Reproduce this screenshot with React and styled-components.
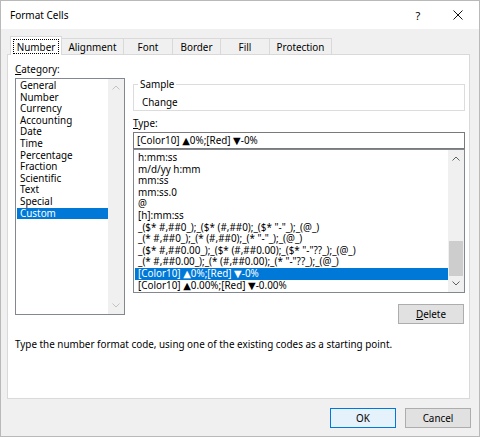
import React from 'react';

import styled, { createGlobalStyle } from 'styled-components';

const categories = [
  'General',
  'Number',
  'Currency',
  'Accounting',
  'Date',
  'Time',
  'Percentage',
  'Fraction',
  'Scientific',
  'Text',
  'Special',
  'Custom',
];

const formats = [
  'h:mm:ss',
  'm/d/yy h:mm',
  'mm:ss',
  'mm:ss.0',
  '@',
  '[h]:mm:ss',
  '_($* #,##0_);_($* (#,##0);_($* "-"_);_(@_)',
  '_(* #,##0_);_(* (#,##0);_(* "-"_);_(@_)',
  '_($* #,##0.00_);_($* (#,##0.00);_($* "-"??_);_(@_)',
  '_(* #,##0.00_);_(* (#,##0.00);_(* "-"??_);_(@_)',
  '[Color10] ▲0%;[Red] ▼-0%',
  '[Color10] ▲0.00%;[Red] ▼-0.00%',
];

const tabs = [
  { label: 'Number', width: 52 },
  { label: 'Alignment', width: 63 },
  { label: 'Font', width: 50 },
  { label: 'Border', width: 49 },
  { label: 'Fill', width: 50 },
  { label: 'Protection', width: 63 },
];

const Chevron = ({ down, color }) => (
  <svg width="8" height="5" viewBox="0 0 8 5">
    <polyline
      points={down ? '0.5,0.5 4,4 7.5,0.5' : '0.5,4.5 4,1 7.5,4.5'}
      fill="none"
      stroke={color}
      strokeWidth="1"
    />
  </svg>
);

const ScrollBar = ({ disabled, thumbTop, thumbHeight }) => {
  const color = disabled ? '#c2c2c2' : '#606060';
  return (
    <Scroll>
      <ScrollArrow>
        <Chevron color={color} />
      </ScrollArrow>
      <Track>
        {!disabled && <Thumb style={{ marginTop: thumbTop, height: thumbHeight }} />}
      </Track>
      <ScrollArrow>
        <Chevron down color={color} />
      </ScrollArrow>
    </Scroll>
  );
};

const App = () => {
  return (
    <>
      <GlobalStyle />
      <Window>
        <TitleBar>
          <Title>Format Cells</Title>
          <TitleButtons>
            <TitleButton>?</TitleButton>
            <TitleButton>
              <svg width="10" height="10" viewBox="0 0 10 10">
                <path d="M0.5 0.5 L9.5 9.5 M9.5 0.5 L0.5 9.5" stroke="#111" strokeWidth="1" />
              </svg>
            </TitleButton>
          </TitleButtons>
        </TitleBar>
        <Body>
          <TabStrip>
            {tabs.map((t, i) => (
              <Tab key={t.label} $active={i === 0} $width={t.width}>
                {i === 0 ? <FocusRing>{t.label}</FocusRing> : t.label}
              </Tab>
            ))}
          </TabStrip>
          <Panel>
            <Columns>
              <CategoryColumn>
                <FieldLabel>
                  <Key>C</Key>ategory:
                </FieldLabel>
                <ListBox $height={237}>
                  <Items $pad={1}>
                    {categories.map((c) => (
                      <Row key={c} $selected={c === 'Custom'} $indent={3}>
                        {c}
                      </Row>
                    ))}
                  </Items>
                  <ScrollBar disabled />
                </ListBox>
              </CategoryColumn>
              <TypeColumn>
                <GroupBox>
                  <GroupTitle>Sample</GroupTitle>
                  <SampleText>Change</SampleText>
                </GroupBox>
                <FieldLabel $gap={5}>
                  <Key>T</Key>ype:
                </FieldLabel>
                <TypeInput>[Color10] ▲0%;[Red] ▼-0%</TypeInput>
                <ListBox $height={144}>
                  <Items $pad={2}>
                    {formats.map((f) => (
                      <Row key={f} $selected={f === '[Color10] ▲0%;[Red] ▼-0%'} $indent={3}>
                        {f}
                      </Row>
                    ))}
                  </Items>
                  <ScrollBar thumbTop={74} thumbHeight={35} />
                </ListBox>
                <DeleteRow>
                  <Button>
                    <Key>D</Key>elete
                  </Button>
                </DeleteRow>
              </TypeColumn>
            </Columns>
            <Hint>Type the number format code, using one of the existing codes as a starting point.</Hint>
          </Panel>
          <Footer>
            <Button $default>OK</Button>
            <Button>Cancel</Button>
          </Footer>
        </Body>
      </Window>
    </>
  );
};

export default App;

const GlobalStyle = createGlobalStyle`
  * {
    box-sizing: border-box;
  }

  body {
    margin: 0;
    background: #f0f0f0;
    font-family: "Noto Sans", "DejaVu Sans", sans-serif;
    font-size: 9.9px;
    color: #000;
  }
`;

const Window = styled.div`
  width: 480px;
  height: 437px;
  display: flex;
  flex-direction: column;
  border: 1px solid #b9b9b9;
  background: #f0f0f0;
  overflow: hidden;
`;

const TitleBar = styled.div`
  height: 28px;
  display: flex;
  align-items: center;
  justify-content: space-between;
  background: #fff;
  padding-left: 9px;
`;

const Title = styled.span`
  font-size: 10px;
`;

const TitleButtons = styled.div`
  display: flex;
  height: 100%;
  padding-right: 1px;
`;

const TitleButton = styled.div`
  width: 40px;
  display: flex;
  align-items: center;
  justify-content: center;
  font-size: 11px;
`;

const Body = styled.div`
  flex: 1;
  display: flex;
  flex-direction: column;
  padding: 7px 8px 0 6px;
`;

const TabStrip = styled.div`
  height: 18px;
  display: flex;
  align-items: flex-end;
  padding-left: 3px;
  position: relative;
  z-index: 1;
`;

const Tab = styled.div`
  width: ${(p) => p.$width}px;
  height: ${(p) => (p.$active ? 19 : 16)}px;
  margin-left: -1px;
  margin-bottom: ${(p) => (p.$active ? -1 : 0)}px;
  display: flex;
  align-items: center;
  justify-content: center;
  border: 1px solid #d9d9d9;
  border-bottom: 0;
  background: ${(p) => (p.$active ? '#fff' : '#f0f0f0')};
  position: relative;
  z-index: ${(p) => (p.$active ? 2 : 1)};

  &:first-child {
    margin-left: 0;
  }
`;

const FocusRing = styled.span`
  display: flex;
  align-items: center;
  justify-content: center;
  width: 46px;
  height: 15px;
  margin-top: 1px;
  border: 1px dotted #000;
`;

const Panel = styled.div`
  height: 345px;
  margin-right: 1px;
  background: #fff;
  border: 1px solid #d9d9d9;
  padding: 7px 4px 0 7px;
`;

const Columns = styled.div`
  display: flex;
  gap: 8px;
`;

const CategoryColumn = styled.div`
  width: 110px;
  display: flex;
  flex-direction: column;
`;

const TypeColumn = styled.div`
  flex: 1;
  display: flex;
  flex-direction: column;
  padding-top: 16px;
`;

const FieldLabel = styled.div`
  height: 16px;
  line-height: 14px;
  margin-top: ${(p) => p.$gap || 0}px;
`;

const Key = styled.span`
  text-decoration: underline;
  text-underline-offset: 1px;
`;

const ListBox = styled.div`
  height: ${(p) => p.$height}px;
  display: flex;
  border: 1px solid #828790;
  background: #fff;
`;

const Items = styled.div`
  flex: 1;
  min-width: 0;
  padding-top: ${(p) => p.$pad}px;
  padding-left: 1px;
  overflow: hidden;
`;

const Row = styled.div`
  height: 11.6px;
  line-height: 11.6px;
  padding-left: ${(p) => p.$indent}px;
  white-space: nowrap;
  background: ${(p) => (p.$selected ? '#0078d7' : 'transparent')};
  color: ${(p) => (p.$selected ? '#fff' : '#000')};
`;

const Scroll = styled.div`
  width: 16px;
  display: flex;
  flex-direction: column;
  background: #f0f0f0;
`;

const ScrollArrow = styled.div`
  height: 17px;
  display: flex;
  align-items: center;
  justify-content: center;
`;

const Track = styled.div`
  flex: 1;
  display: flex;
  flex-direction: column;
  align-items: center;
`;

const Thumb = styled.div`
  width: 14px;
  background: #cdcdcd;
`;

const GroupBox = styled.div`
  height: 27px;
  margin-top: 6px;
  border: 1px solid #dcdcdc;
`;

const GroupTitle = styled.div`
  width: fit-content;
  margin: -7px 0 0 4px;
  padding: 0 2px;
  line-height: 12px;
  background: #fff;
`;

const SampleText = styled.div`
  margin-top: 6px;
  padding-left: 8px;
  line-height: 12px;
`;

const TypeInput = styled.div`
  height: 17px;
  line-height: 15px;
  padding-left: 3px;
  border: 1px solid #7a7a7a;
  white-space: nowrap;
`;

const DeleteRow = styled.div`
  display: flex;
  justify-content: flex-end;
  margin-top: 11px;
  padding-right: 1px;
`;

const Button = styled.div`
  width: 66px;
  height: 20px;
  display: flex;
  align-items: center;
  justify-content: center;
  background: ${(p) => (p.$default ? '#e5f1fb' : '#e1e1e1')};
  border: 1px solid ${(p) => (p.$default ? '#0078d7' : '#adadad')};
`;

const Hint = styled.div`
  margin-top: 13px;
  line-height: 14px;
`;

const Footer = styled.div`
  display: flex;
  justify-content: flex-end;
  gap: 9px;
  margin-top: 9px;
`;
